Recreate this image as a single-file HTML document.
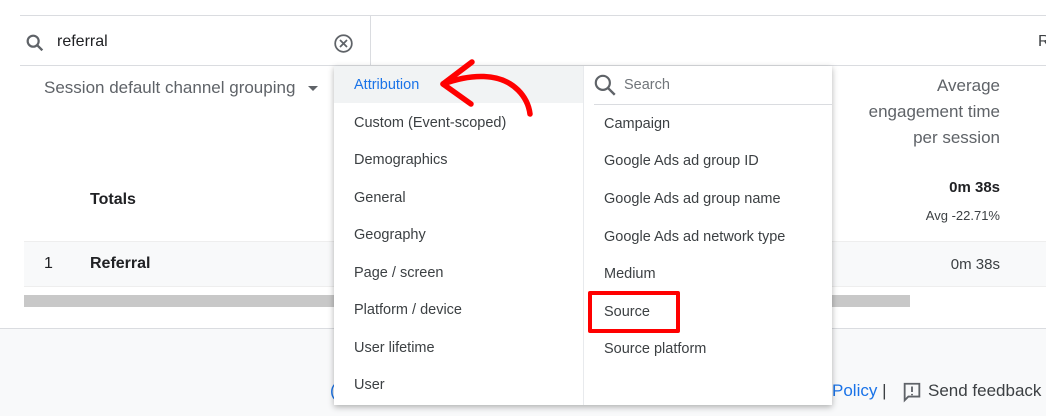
<!DOCTYPE html>
<html><head><style>
*{margin:0;padding:0;box-sizing:border-box}
body{width:1046px;height:416px;overflow:hidden;background:#fff;font-family:"Liberation Sans",Arial,sans-serif;position:relative;color:#3c4043}
.a{position:absolute;white-space:nowrap}
.mi{position:absolute;left:20px;font-size:14.5px;color:#3c4043}
.ri{position:absolute;left:20px;font-size:14.5px;color:#3c4043}
</style></head><body>
<div class="a" style="left:20px;top:15px;width:1026px;height:1px;background:#dadce0"></div>
<div class="a" style="left:20px;top:65px;width:1026px;height:1px;background:#dadce0"></div>
<div class="a" style="left:370px;top:15px;width:1px;height:50px;background:#dadce0"></div>
<svg class="a" style="left:24px;top:32px" width="22" height="22" viewBox="0 0 24 24"><circle cx="10" cy="10" r="6" fill="none" stroke="#5f6368" stroke-width="2.4"/><path d="M14.5 14.5 L20 20" stroke="#5f6368" stroke-width="2.6"/></svg>
<div class="a" style="left:57px;top:33px;font-size:16px;color:#202124">referral</div>
<svg class="a" style="left:333px;top:33px" width="21" height="21" viewBox="0 0 24 24"><circle cx="12" cy="12" r="9.5" fill="none" stroke="#5f6368" stroke-width="2"/><path d="M8 8L16 16M16 8L8 16" stroke="#5f6368" stroke-width="2"/></svg>
<div class="a" style="left:1038px;top:33px;font-size:16px">R</div>
<div class="a" style="left:44px;top:78px;font-size:17px;color:#5f6368">Session default channel grouping</div>
<div class="a" style="left:308px;top:86px;width:0;height:0;border-left:5px solid transparent;border-right:5px solid transparent;border-top:5px solid #5f6368"></div>
<div class="a" style="right:46px;top:73px;font-size:17px;color:#5f6368;text-align:right;line-height:26px">Average<br>engagement time<br>per session</div>
<div class="a" style="left:90px;top:191px;font-size:16px;font-weight:bold;color:#202124">Totals</div>
<div class="a" style="right:46px;top:179px;font-size:15px;font-weight:bold;color:#202124">0m 38s</div>
<div class="a" style="right:46px;top:208px;font-size:13px;color:#3c4043">Avg -22.71%</div>
<div class="a" style="left:24px;top:241px;width:1022px;height:46px;background:#f8f9fa;border-top:1px solid #eee;border-bottom:1px solid #eee"></div>
<div class="a" style="left:44px;top:255px;font-size:16px;color:#202124">1</div>
<div class="a" style="left:90px;top:255px;font-size:16px;font-weight:bold;color:#202124">Referral</div>
<div class="a" style="right:46px;top:256px;font-size:15px;color:#3c4043">0m 38s</div>
<div class="a" style="left:24px;top:295px;width:886px;height:12px;background:#c8c8c8"></div>
<div class="a" style="left:0;top:328px;width:1046px;height:88px;background:#f8f9fa;border-top:1px solid #dadce0"></div>
<div class="a" style="left:330px;top:381px;font-size:17px;color:#1a73e8">(</div>
<div class="a" style="left:832px;top:381px;font-size:17px;color:#1a73e8">Policy <span style="color:#3c4043">|</span></div>
<svg class="a" style="left:901px;top:381px" width="22" height="22" viewBox="0 0 24 24"><path d="M4 3h16v14H8l-4 4z" fill="none" stroke="#5f6368" stroke-width="2"/><path d="M12 6v6M12 14v1.5" stroke="#5f6368" stroke-width="2"/></svg>
<div class="a" style="left:928px;top:381px;font-size:17px;color:#3c4043">Send feedback</div>

<div class="a" style="left:334px;top:66px;width:498px;height:339px;background:#fff;box-shadow:0 2px 6px rgba(0,0,0,.3)">
 <div class="a" style="left:0;top:0;width:249px;height:37px;background:#f1f3f4"></div>
 <div class="a" style="left:249px;top:0;width:1px;height:339px;background:#e8eaed"></div>
 <div class="mi" style="top:11px;color:#1a73e8">Attribution</div>
 <div class="mi" style="top:49px">Custom (Event-scoped)</div>
 <div class="mi" style="top:86px">Demographics</div>
 <div class="mi" style="top:124px">General</div>
 <div class="mi" style="top:161px">Geography</div>
 <div class="mi" style="top:199px">Page / screen</div>
 <div class="mi" style="top:236px">Platform / device</div>
 <div class="mi" style="top:274px">User lifetime</div>
 <div class="mi" style="top:311px">User</div>
 <div class="a" style="left:250px;top:0;width:248px;height:339px">
  <svg class="a" style="left:8px;top:6px" width="26" height="26" viewBox="0 0 24 24"><circle cx="10" cy="10" r="6.5" fill="none" stroke="#5f6368" stroke-width="2"/><path d="M14.8 14.8L21 21" stroke="#5f6368" stroke-width="2.2"/></svg>
  <div class="a" style="left:40px;top:11px;font-size:14.5px;color:#70757a">Search</div>
  <div class="a" style="left:10px;top:38px;width:238px;height:1px;background:#dadce0"></div>
  <div class="ri" style="top:50px">Campaign</div>
  <div class="ri" style="top:87px">Google Ads ad group ID</div>
  <div class="ri" style="top:125px">Google Ads ad group name</div>
  <div class="ri" style="top:163px">Google Ads ad network type</div>
  <div class="ri" style="top:200px">Medium</div>
  <div class="ri" style="top:238px">Source</div>
  <div class="ri" style="top:275px">Source platform</div>
 </div>
</div>
<div class="a" style="left:588px;top:291px;width:92px;height:42px;border:4px solid #f00;border-radius:2px"></div>
<svg class="a" style="left:0;top:0" width="1046" height="416"><path d="M443 84 C470 74 500 72 518 90 C526 98 529 106 530 114" fill="none" stroke="#f00" stroke-width="5.5" stroke-linecap="round"/><path d="M472 62 L443 84 L471 104" fill="none" stroke="#f00" stroke-width="5.5" stroke-linecap="round" stroke-linejoin="round"/></svg>
</body></html>
